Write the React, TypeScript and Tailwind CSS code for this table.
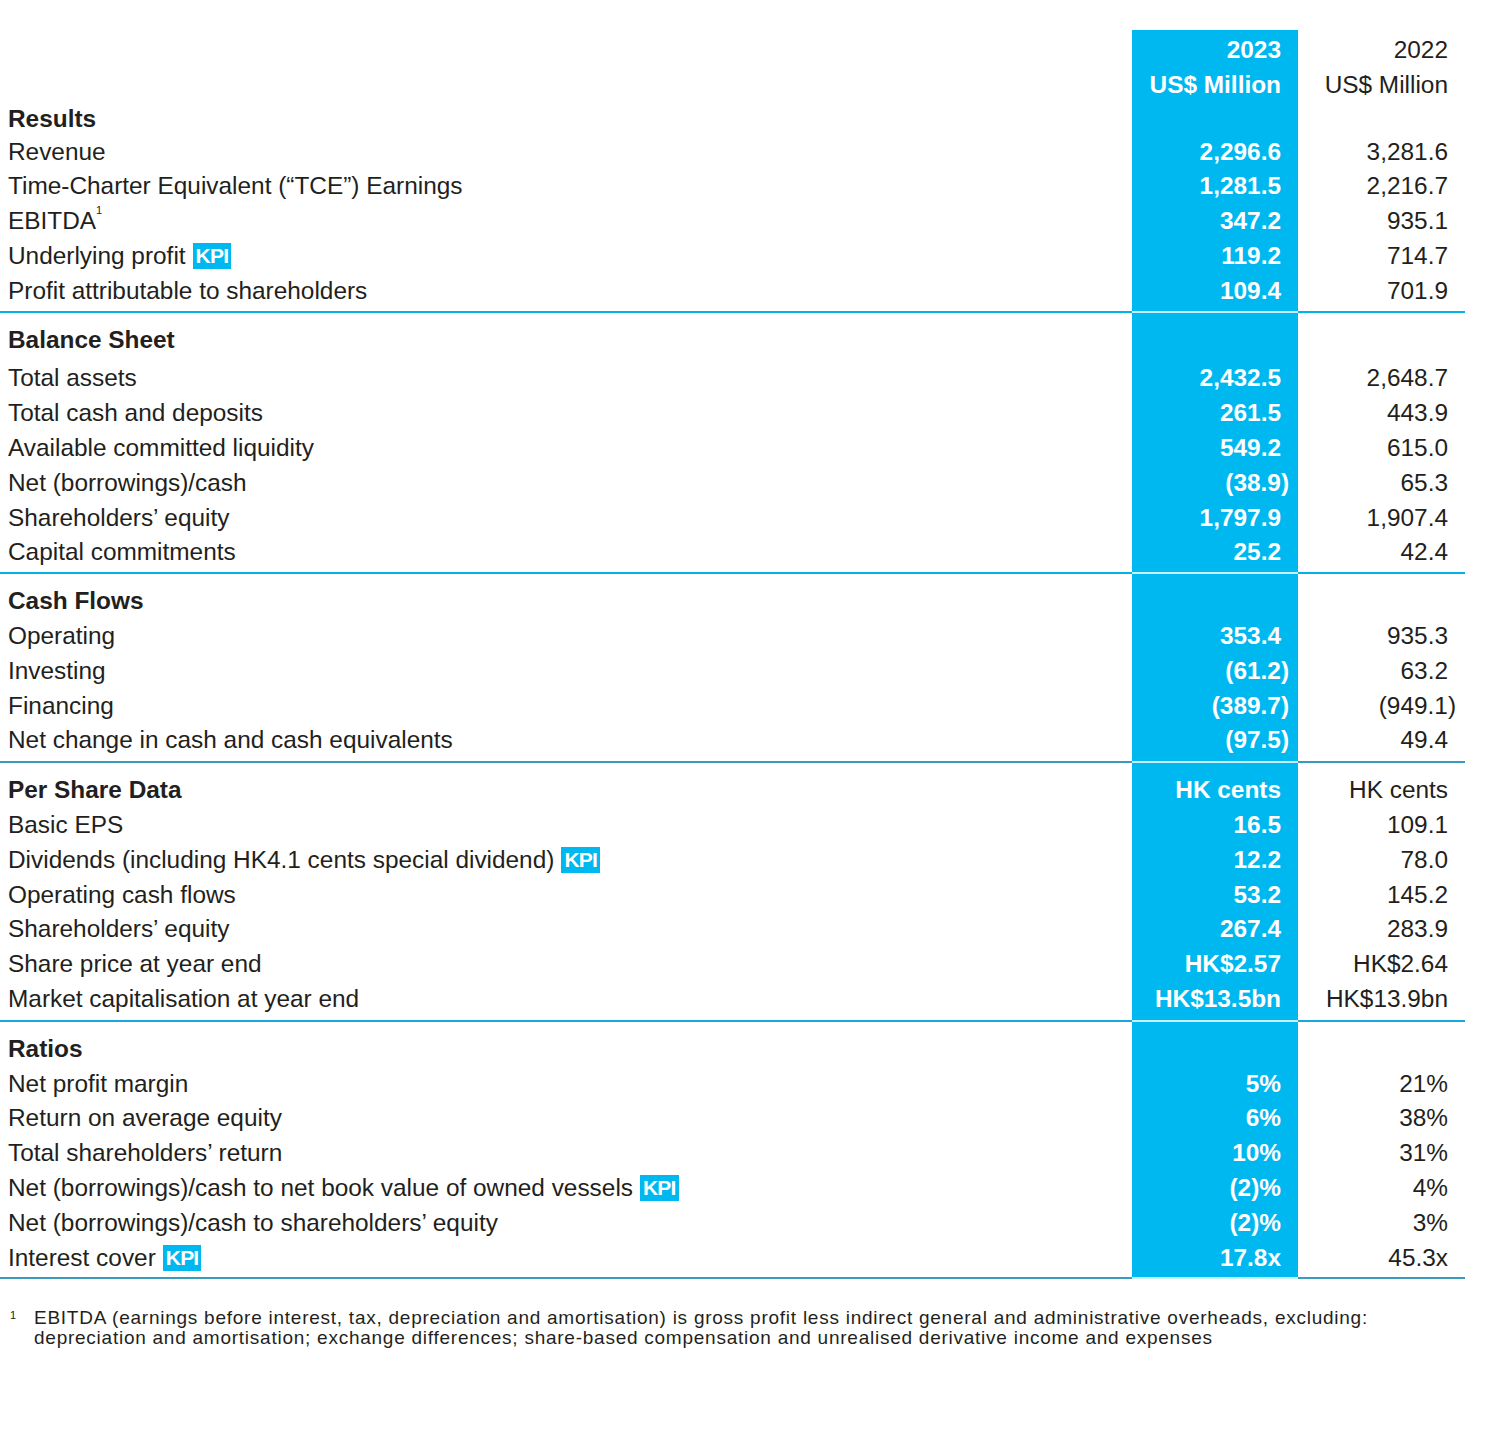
import type { ReactNode } from 'react';

type Line = { label: ReactNode; a: string; b: string };
type Section = {
  title: string;
  a?: string;
  b?: string;
  gap?: boolean;
  pb: string;
  line: string;
  rows: Line[];
};

const Kpi = () => (
  <span className="inline-block ml-[7px] align-[1px] bg-[#00b8f0] text-white font-bold text-[21px] leading-[26px] px-[3px] tracking-[-0.8px]">
    KPI
  </span>
);

// hanging closing bracket so figures line up on the digit
const Val = ({ v }: { v: string }) =>
  v.endsWith(')') ? (
    <>
      {v.slice(0, -1)}
      <span className="-mr-[8px]">)</span>
    </>
  ) : (
    <>{v}</>
  );

const sections: Section[] = [
  {
    title: 'Balance Sheet',
    gap: true,
    pb: 'h-[2px]',
    line: 'bg-[#00b4e8]',
    rows: [
      { label: 'Total assets', a: '2,432.5', b: '2,648.7' },
      { label: 'Total cash and deposits', a: '261.5', b: '443.9' },
      { label: 'Available committed liquidity', a: '549.2', b: '615.0' },
      { label: 'Net (borrowings)/cash', a: '(38.9)', b: '65.3' },
      { label: 'Shareholders’ equity', a: '1,797.9', b: '1,907.4' },
      { label: 'Capital commitments', a: '25.2', b: '42.4' },
    ],
  },
  {
    title: 'Cash Flows',
    pb: 'h-[3px]',
    line: 'bg-[#3a9bbd]',
    rows: [
      { label: 'Operating', a: '353.4', b: '935.3' },
      { label: 'Investing', a: '(61.2)', b: '63.2' },
      { label: 'Financing', a: '(389.7)', b: '(949.1)' },
      { label: 'Net change in cash and cash equivalents', a: '(97.5)', b: '49.4' },
    ],
  },
  {
    title: 'Per Share Data',
    a: 'HK cents',
    b: 'HK cents',
    pb: 'h-[3px]',
    line: 'bg-[#1aa8dc]',
    rows: [
      { label: 'Basic EPS', a: '16.5', b: '109.1' },
      {
        label: (
          <>
            Dividends (including HK4.1 cents special dividend)
            <Kpi />
          </>
        ),
        a: '12.2',
        b: '78.0',
      },
      { label: 'Operating cash flows', a: '53.2', b: '145.2' },
      { label: 'Shareholders’ equity', a: '267.4', b: '283.9' },
      { label: 'Share price at year end', a: 'HK$2.57', b: 'HK$2.64' },
      { label: 'Market capitalisation at year end', a: 'HK$13.5bn', b: 'HK$13.9bn' },
    ],
  },
  {
    title: 'Ratios',
    pb: 'h-[2px]',
    line: 'bg-[#3a9bbd]',
    rows: [
      { label: 'Net profit margin', a: '5%', b: '21%' },
      { label: 'Return on average equity', a: '6%', b: '38%' },
      { label: 'Total shareholders’ return', a: '10%', b: '31%' },
      {
        label: (
          <>
            Net (borrowings)/cash to net book value of owned vessels
            <Kpi />
          </>
        ),
        a: '(2)%',
        b: '4%',
      },
      { label: 'Net (borrowings)/cash to shareholders’ equity', a: '(2)%', b: '3%' },
      {
        label: (
          <>
            Interest cover
            <Kpi />
          </>
        ),
        a: '17.8x',
        b: '45.3x',
      },
    ],
  },
];

const results: Line[] = [
  { label: 'Revenue', a: '2,296.6', b: '3,281.6' },
  { label: 'Time-Charter Equivalent (“TCE”) Earnings', a: '1,281.5', b: '2,216.7' },
  {
    label: (
      <>
        EBITDA<sup className="text-[11px] align-[10px]">1</sup>
      </>
    ),
    a: '347.2',
    b: '935.1',
  },
  {
    label: (
      <>
        Underlying profit
        <Kpi />
      </>
    ),
    a: '119.2',
    b: '714.7',
  },
  { label: 'Profit attributable to shareholders', a: '109.4', b: '701.9' },
];

const Row = ({ r }: { r: Line }) => (
  <div className="grid grid-cols-[1132px_166px_167px] h-[34.8px] leading-[34.8px]">
    <div className="pl-[8px] whitespace-nowrap">{r.label}</div>
    <div className="bg-[#00b8f0] text-white font-bold text-right pr-[17px] whitespace-nowrap">
      <Val v={r.a} />
    </div>
    <div className="text-right pr-[17px] whitespace-nowrap">
      <Val v={r.b} />
    </div>
  </div>
);

const Spacer = ({ h }: { h: string }) => (
  <div className={`grid grid-cols-[1132px_166px_167px] ${h}`}>
    <div />
    <div className="bg-[#00b8f0]" />
    <div />
  </div>
);

const Divider = ({ color }: { color: string }) => (
  <div className="grid grid-cols-[1132px_166px_167px] h-[2px]">
    <div className={color} />
    <div className="bg-[#c8effd]" />
    <div className={color} />
  </div>
);

export default function App() {
  return (
    <div className="w-[1500px] h-[1430px] bg-white pt-[30px] font-['Liberation_Sans',Arial,sans-serif] text-[24.4px] text-[#231f20]">
      <div className="w-[1465px]">
        {/* column heads */}
        <div className="grid grid-cols-[1132px_166px_167px] h-[37.8px] leading-[34.8px]">
          <div />
          <div className="bg-[#00b8f0] text-white font-bold text-right pr-[17px] pt-[3px]">2023</div>
          <div className="text-right pr-[17px] pt-[3px]">2022</div>
        </div>
        <div className="grid grid-cols-[1132px_166px_167px] h-[34.8px] leading-[34.8px]">
          <div />
          <div className="bg-[#00b8f0] text-white font-bold text-right pr-[17px]">US$ Million</div>
          <div className="text-right pr-[17px]">US$ Million</div>
        </div>
        <div className="grid grid-cols-[1132px_166px_167px] h-[32px] leading-[32px]">
          <div className="pl-[8px] font-bold">Results</div>
          <div className="bg-[#00b8f0]" />
          <div />
        </div>
        {results.map((r, i) => (
          <Row key={i} r={r} />
        ))}
        <Spacer h="h-[2px]" />
        <Divider color="bg-[#00b4e8]" />

        {sections.map((s) => (
          <div key={s.title}>
            <div
              className={`grid grid-cols-[1132px_166px_167px] leading-[34.8px] ${s.gap ? 'h-[48.8px]' : 'h-[44.8px]'}`}
            >
              <div className="pl-[8px] pt-[10px] font-bold">{s.title}</div>
              <div className="bg-[#00b8f0] text-white font-bold text-right pr-[17px] pt-[10px]">{s.a}</div>
              <div className="text-right pr-[17px] pt-[10px]">{s.b}</div>
            </div>
            {s.rows.map((r, i) => (
              <Row key={i} r={r} />
            ))}
            <Spacer h={s.pb} />
            <Divider color={s.line} />
          </div>
        ))}
      </div>

      {/* footnote */}
      <div className="flex mt-[29px] pl-[10px] text-[19px] leading-[19.5px] text-[#231f20] tracking-[0.75px]">
        <span className="w-[24px] shrink-0 text-[11px] leading-[14px]">1</span>
        <p className="whitespace-nowrap">
          EBITDA (earnings before interest, tax, depreciation and amortisation) is gross profit less indirect general and
          administrative overheads, excluding:
          <br />
          depreciation and amortisation; exchange differences; share-based compensation and unrealised derivative income
          and expenses
        </p>
      </div>
    </div>
  );
}
